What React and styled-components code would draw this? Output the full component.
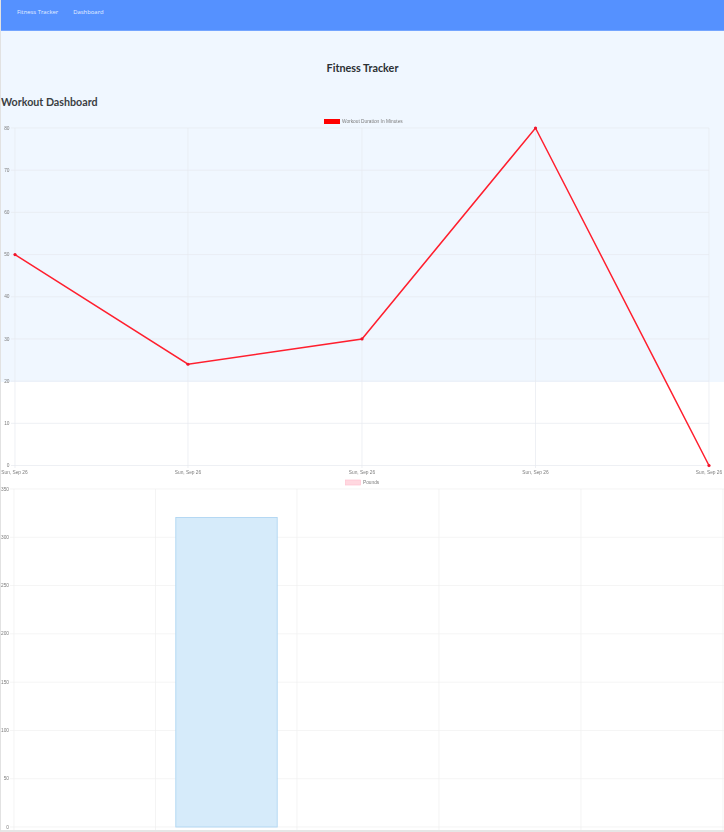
import React from "react";
import styled, { createGlobalStyle } from "styled-components";

const Global = createGlobalStyle`
  html, body { margin: 0; padding: 0; background: #fff; }
  body { font-family: "Lato", "Liberation Sans", sans-serif; }
`;
const Frame = styled.div`
  box-sizing: border-box;
  width: 724px;
  height: 832px;
  overflow: hidden;
  border-left: 1px solid #e2e2e2;
  border-bottom: 2px solid #e6e6e6;
  filter: blur(0.3px);
`;
const Navbar = styled.nav`
  height: 31px;
  background: #5591ff;
  border-bottom: 1px solid #74a5ff;
  box-sizing: border-box;
  display: flex;
  align-items: center;
  gap: 15px;
  padding-left: 16px;
`;
const NavLink = styled.a`
  color: #e4eeff;
  font-family: "Open Sans", "Liberation Sans", sans-serif;
  font-size: 5.9px;
  line-height: 1;
  margin-top: -4px;
`;
const Main = styled.main`
  height: 351px;
  background: #f0f7ff;
  padding-top: 30px;
  box-sizing: border-box;
`;
const Title = styled.h1`
  margin: 0;
  text-align: center;
  font-size: 10.8px;
  line-height: 14px;
  font-weight: 700;
  color: #2c3034;
`;
const Heading = styled.h2`
  margin: 19px 0 0;
  font-size: 10.7px;
  line-height: 16px;
  font-weight: 700;
  color: #3a3e42;
`;
const ChartSvg = styled.svg`
  display: block;
  width: 724px;
  margin-left: -1px;
  overflow: visible;
`;
const LineChartSvg = styled(ChartSvg)`
  height: 362px;
  margin-top: 5px;
`;
const BarChartSvg = styled(ChartSvg)`
  height: 353px;
`;
const Tick = styled.text`
  font-family: "Liberation Sans", sans-serif;
  font-size: 4.8px;
  fill: #7d7d7d;
`;
const Grid = styled.line`
  stroke: ${(p) => (p.$light ? "#efefef" : "#e6e9ef")};
  stroke-width: 0.7;
`;

const lineX = [15, 188, 362, 535.5, 709];
const lineVals = [50, 24, 30, 80, 0];
const lineTicks = [80, 70, 60, 50, 40, 30, 20, 10, 0];
const y1 = (v) => 465.5 - (v / 80) * 337.5;

const barX = [14, 155.5, 297, 439, 581, 723];
const barTicks = [350, 300, 250, 200, 150, 100, 50, 0];
const y2 = (v) => 827 - (v / 350) * 338;

function LineChart() {
  const pts = lineVals.map((v, i) => `${lineX[i]},${y1(v)}`).join(" ");
  return (
    <LineChartSvg viewBox="0 115 724 362">
      <rect x="324" y="119" width="16" height="5" fill="#ff0000" />
      <Tick x="342" y="122.6">Workout Duration In Minutes</Tick>
      {lineTicks.map((t) => (
        <g key={t}>
          <Grid x1="11" x2="709" y1={y1(t)} y2={y1(t)} />
          <Tick x="9.5" y={y1(t) + 1.6} textAnchor="end">{t}</Tick>
        </g>
      ))}
      {lineX.map((x, i) => (
        <g key={i}>
          <Grid x1={x} x2={x} y1="128" y2="468" />
          <Tick x={i === 0 ? 14.5 : x} y="474" textAnchor="middle">Sun, Sep 26</Tick>
        </g>
      ))}
      <polyline points={pts} fill="none" stroke="#ff1f2e" strokeWidth="1.5" />
      {lineVals.map((v, i) => (
        <circle key={i} cx={lineX[i]} cy={y1(v)} r="1.6" fill="#f0142a" />
      ))}
    </LineChartSvg>
  );
}

function BarChart() {
  return (
    <BarChartSvg viewBox="0 477 724 353">
      <rect x="345.5" y="480" width="15" height="5" fill="#ffd8e0" stroke="#ffc4d2" strokeWidth="0.7" />
      <Tick x="363" y="484.2">Pounds</Tick>
      {barTicks.map((t) => (
        <g key={t}>
          <Grid $light x1="10" x2="724" y1={y2(t)} y2={y2(t)} />
          <Tick x="9" y={y2(t) + 1.6} textAnchor="end">{t}</Tick>
        </g>
      ))}
      {barX.map((x) => (
        <Grid $light key={x} x1={x} x2={x} y1="489" y2="830" />
      ))}
      <rect x="175.8" y="517.5" width="101.4" height="309.5" fill="#d6ebfa" stroke="#b0d6f2" strokeWidth="0.9" />
    </BarChartSvg>
  );
}

export default function App() {
  return (
    <>
      <Global />
      <Frame>
        <Navbar>
          <NavLink>Fitness Tracker</NavLink>
          <NavLink>Dashboard</NavLink>
        </Navbar>
        <Main>
          <Title>Fitness Tracker</Title>
          <Heading>Workout Dashboard</Heading>
          <LineChart />
          <BarChart />
        </Main>
      </Frame>
    </>
  );
}
